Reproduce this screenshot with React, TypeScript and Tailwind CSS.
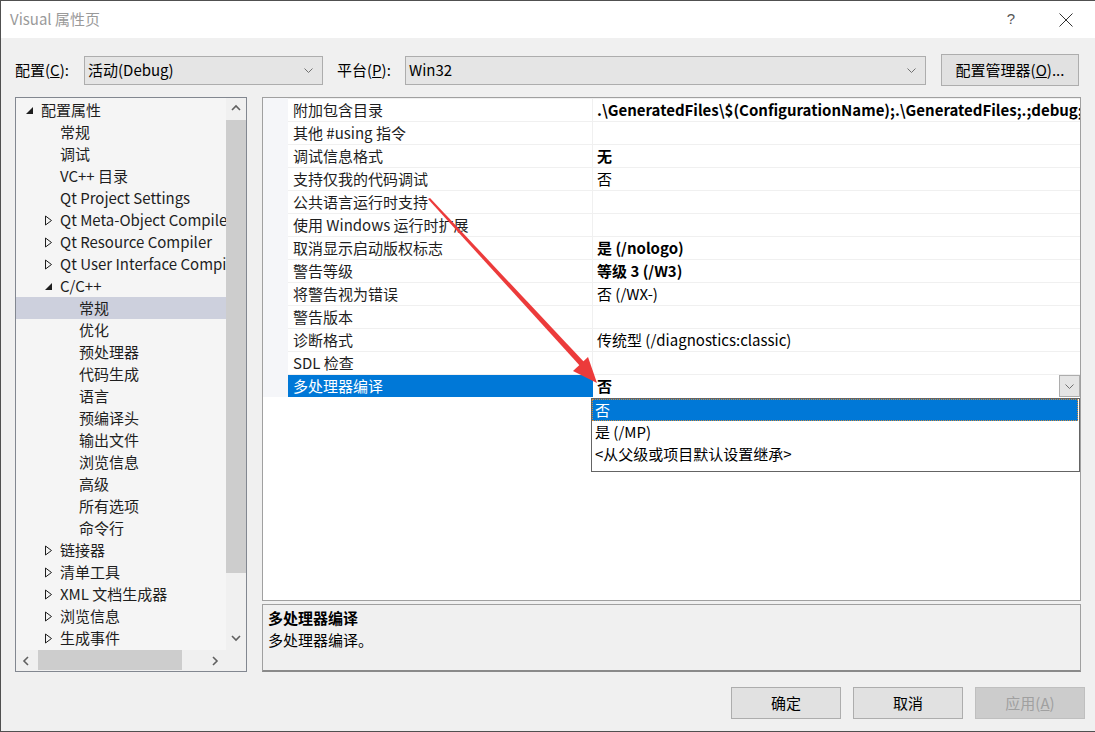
import React from 'react';

const FONT = "font-['Noto_Sans_CJK_SC','Liberation_Sans',sans-serif]";

type TreeItem = { label: string; level: 0 | 1 | 2; arrow?: 'open' | 'closed'; selected?: boolean };

const treeItems: TreeItem[] = [
  { label: '配置属性', level: 0, arrow: 'open' },
  { label: '常规', level: 1 },
  { label: '调试', level: 1 },
  { label: 'VC++ 目录', level: 1 },
  { label: 'Qt Project Settings', level: 1 },
  { label: 'Qt Meta-Object Compiler', level: 1, arrow: 'closed' },
  { label: 'Qt Resource Compiler', level: 1, arrow: 'closed' },
  { label: 'Qt User Interface Compiler', level: 1, arrow: 'closed' },
  { label: 'C/C++', level: 1, arrow: 'open' },
  { label: '常规', level: 2, selected: true },
  { label: '优化', level: 2 },
  { label: '预处理器', level: 2 },
  { label: '代码生成', level: 2 },
  { label: '语言', level: 2 },
  { label: '预编译头', level: 2 },
  { label: '输出文件', level: 2 },
  { label: '浏览信息', level: 2 },
  { label: '高级', level: 2 },
  { label: '所有选项', level: 2 },
  { label: '命令行', level: 2 },
  { label: '链接器', level: 1, arrow: 'closed' },
  { label: '清单工具', level: 1, arrow: 'closed' },
  { label: 'XML 文档生成器', level: 1, arrow: 'closed' },
  { label: '浏览信息', level: 1, arrow: 'closed' },
  { label: '生成事件', level: 1, arrow: 'closed' },
];

const indent = ['pl-[9px]', 'pl-[28px]', 'pl-[47px]'];

type Prop = { name: string; value?: string; bold?: boolean };

const props: Prop[] = [
  {
    name: '附加包含目录',
    value: '.\\GeneratedFiles\\$(ConfigurationName);.\\GeneratedFiles;.;debug;$(Qt_INCLUDEPATH_);%(AdditionalIncludeDirectories)',
    bold: true,
  },
  { name: '其他 #using 指令' },
  { name: '调试信息格式', value: '无', bold: true },
  { name: '支持仅我的代码调试', value: '否' },
  { name: '公共语言运行时支持' },
  { name: '使用 Windows 运行时扩展' },
  { name: '取消显示启动版权标志', value: '是 (/nologo)', bold: true },
  { name: '警告等级', value: '等级 3 (/W3)', bold: true },
  { name: '将警告视为错误', value: '否 (/WX-)' },
  { name: '警告版本' },
  { name: '诊断格式', value: '传统型 (/diagnostics:classic)' },
  { name: 'SDL 检查' },
];

function Chevron({ color = '#606060' }: { color?: string }) {
  return (
    <svg width="9" height="5" viewBox="0 0 9 5">
      <polyline points="0.5,0.5 4.5,4.5 8.5,0.5" fill="none" stroke={color} strokeWidth="1" />
    </svg>
  );
}

function ScrollArrow({ dir }: { dir: 'up' | 'down' | 'left' | 'right' }) {
  const pts = {
    up: '1,6 5,2 9,6',
    down: '1,2 5,6 9,2',
    left: '6,1 2,5 6,9',
    right: '3,1 7,5 3,9',
  }[dir];
  return (
    <svg width="10" height="10" viewBox="0 0 10 10">
      <polyline points={pts} fill="none" stroke="#606060" strokeWidth="1.6" />
    </svg>
  );
}

function TreeArrow({ kind }: { kind: 'open' | 'closed' }) {
  if (kind === 'open') {
    return (
      <svg width="9" height="9" viewBox="0 0 9 9">
        <polygon points="8,1 8,8 1,8" fill="#1e1e1e" />
      </svg>
    );
  }
  return (
    <svg width="9" height="11" viewBox="0 0 9 11">
      <polygon points="1.5,1 7.5,5.5 1.5,10" fill="none" stroke="#1e1e1e" strokeWidth="1" />
    </svg>
  );
}

function Combo({ text, width }: { text: string; width: string }) {
  return (
    <div className={`${width} h-[29px] bg-[#e5e5e5] border border-[#adadad] flex items-center pl-[3px] pr-[9px]`}>
      <span className="flex-1 text-[15px] leading-[20px] text-black">{text}</span>
      <Chevron color="#707070" />
    </div>
  );
}

function TreePanel() {
  return (
    <div className="w-[232px] h-[575px] border border-[#828790] flex flex-col">
      <div className="h-[552px] flex">
        <div className="w-[210px] bg-[#f5f5f5] pt-[1px] overflow-hidden">
          {treeItems.map((it, i) => (
            <div
              key={i}
              className={`h-[22px] flex items-center whitespace-nowrap ${indent[it.level]} ${it.selected ? 'bg-[#cdd0dd]' : ''}`}
            >
              <div className="w-[16px] shrink-0 h-[22px] flex items-center">
                {it.arrow && <TreeArrow kind={it.arrow} />}
              </div>
              <span className="shrink-0 text-[15px] leading-[22px] text-[#1e1e1e]">{it.label}</span>
            </div>
          ))}
        </div>
        <div className="w-[20px] bg-[#f0f0f0] flex flex-col">
          <div className="h-[22px] flex items-center justify-center">
            <ScrollArrow dir="up" />
          </div>
          <div className="h-[453px] bg-[#cdcdcd]" />
          <div className="flex-1" />
          <div className="h-[22px] flex items-center justify-center">
            <ScrollArrow dir="down" />
          </div>
        </div>
      </div>
      <div className="h-[21px] flex bg-[#f0f0f0]">
        <div className="w-[22px] flex items-center justify-center">
          <ScrollArrow dir="left" />
        </div>
        <div className="w-[144px] h-[20px] bg-[#cdcdcd]" />
        <div className="flex-1" />
        <div className="w-[22px] flex items-center justify-center">
          <ScrollArrow dir="right" />
        </div>
        <div className="w-[20px]" />
      </div>
    </div>
  );
}

function PropertyGrid() {
  return (
    <div className="relative h-[504px] bg-white border border-[#a0a0a0]">
      {props.map((p, i) => (
        <div key={i} className="h-[23px] flex">
          <div className="w-[25px] shrink-0 bg-[#f5f6f9]" />
          <div className="flex-1 min-w-0 flex border-t border-[#f0f0f0]">
            <div className="w-[305px] shrink-0 border-r border-[#f0f0f0] pl-[5px] text-[15px] leading-[22px] text-[#1e1e1e] whitespace-nowrap overflow-hidden">
              {p.name}
            </div>
            <div
              className={`flex-1 min-w-0 pl-[4px] text-[15px] leading-[22px] text-black whitespace-nowrap overflow-hidden ${p.bold ? 'font-bold' : ''}`}
            >
              {p.value ?? ''}
            </div>
          </div>
        </div>
      ))}
      <div className="h-[23px] flex">
        <div className="w-[25px] shrink-0 bg-[#f5f6f9]" />
        <div className="flex-1 min-w-0 flex border-t border-[#f0f0f0]">
          <div className="w-[305px] shrink-0 bg-[#0078d7] pl-[5px] text-[15px] leading-[22px] text-white">多处理器编译</div>
          <div className="flex-1 min-w-0 flex items-stretch">
            <span className="flex-1 pl-[4px] text-[15px] leading-[22px] font-bold text-black">否</span>
            <div className="w-[21px] bg-[#e5e5e5] border border-[#adadad] flex items-center justify-center">
              <Chevron color="#707070" />
            </div>
          </div>
        </div>
      </div>

      <div className="absolute left-[328px] top-[300px] w-[489px] h-[74px] bg-white border border-[#646464] pr-[1px]">
        <div className="h-[22px] bg-[#0078d7] border border-dotted border-[#d08a3a] pl-[2px] text-[15px] leading-[20px] text-white">
          否
        </div>
        <div className="h-[22px] pl-[3px] text-[15px] leading-[22px] text-black">是 (/MP)</div>
        <div className="h-[22px] pl-[3px] text-[15px] leading-[22px] text-black">&lt;从父级或项目默认设置继承&gt;</div>
      </div>
    </div>
  );
}

function Button({ children, disabled }: { children: React.ReactNode; disabled?: boolean }) {
  return (
    <div
      className={`w-[110px] h-[32px] flex items-center justify-center text-[15px] border ${
        disabled ? 'bg-[#cccccc] border-[#bfbfbf] text-[#a0a0a0]' : 'bg-[#e1e1e1] border-[#adadad] text-black'
      }`}
    >
      {children}
    </div>
  );
}

export default function App() {
  return (
    <div className={`relative w-[1095px] h-[732px] overflow-hidden bg-[#f0f0f0] border-l border-t border-b border-[#505050] ${FONT}`}>
      {/* title bar */}
      <div className="h-[37px] bg-white flex items-center pl-[9px] pr-[22px]">
        <span className="flex-1 text-[15px] text-[#9a9a9a]">Visual 属性页</span>
        <span className="text-[15px] text-[#555] mr-[44px] font-['Liberation_Sans']">?</span>
        <svg width="14" height="14" viewBox="0 0 14 14">
          <path d="M0.5 0.5 L13.5 13.5 M13.5 0.5 L0.5 13.5" stroke="#333" strokeWidth="1" />
        </svg>
      </div>

      <div className="pl-[14px] pr-[14px] flex flex-col">
        {/* configuration row */}
        <div className="mt-[16px] h-[32px] flex items-center text-[15px] text-black">
          <span className="w-[69px]">
            配置(<span className="underline">C</span>):
          </span>
          <Combo text="活动(Debug)" width="w-[239px]" />
          <span className="ml-[14px] w-[68px]">
            平台(<span className="underline">P</span>):
          </span>
          <Combo text="Win32" width="w-[521px]" />
          <div className="ml-[15px] w-[138px] h-[32px] bg-[#e1e1e1] border border-[#adadad] flex items-center justify-center">
            配置管理器(<span className="underline">O</span>)...
          </div>
        </div>

        {/* main area */}
        <div className="mt-[11px] h-[575px] flex gap-[15px]">
          <TreePanel />
          <div className="w-[819px] flex flex-col">
            <PropertyGrid />
            <div className="mt-[3px] h-[68px] border border-[#a0a0a0] border-b-[#8a8a8a] border-b-2 bg-[#f0f0f0] pl-[5px] pt-[2px]">
              <div className="text-[15px] leading-[22px] font-bold text-black">多处理器编译</div>
              <div className="text-[15px] leading-[22px] text-black">多处理器编译。</div>
            </div>
          </div>
        </div>

        {/* buttons */}
        <div className="mt-[15px] -mr-[4px] flex justify-end gap-[12px]">
          <Button>确定</Button>
          <Button>取消</Button>
          <Button disabled>
            应用(<span className="underline">A</span>)
          </Button>
        </div>
      </div>

      {/* annotation arrow */}
      <svg className="absolute left-0 top-0 pointer-events-none" width="1095" height="732" viewBox="0 0 1095 732">
        <polygon points="427,198 429,197 584,362 580,366" fill="#ec3b3b" />
        <polygon points="596,382 572,370 587,356" fill="#ec3b3b" />
      </svg>
    </div>
  );
}
